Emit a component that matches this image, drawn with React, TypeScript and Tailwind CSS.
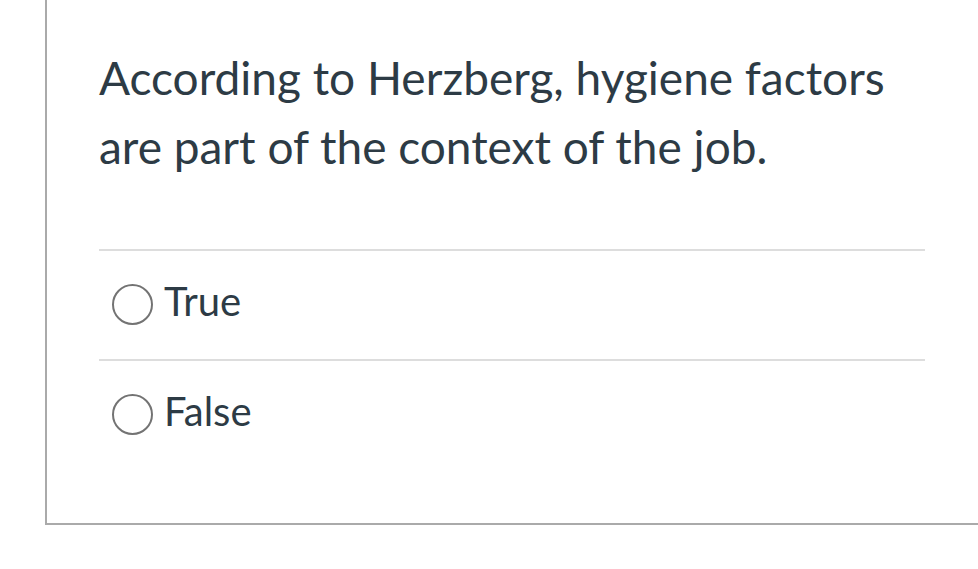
import React from "react";

const options = ["True", "False"];

export default function App() {
  return (
    <div className="w-[978px] h-[569px] bg-white overflow-hidden" style={{ fontFamily: "Lato, 'Noto Sans', sans-serif" }}>
      <div className="ml-[45px] h-[525px] border-l-2 border-b-2 border-[#aaaaaa] pl-[52px] pr-[53px] pt-[43px] text-[#2d3b45]">
        <p className="text-[46px] leading-[69px] pr-8">
          According to Herzberg, hygiene factors are part of the context of the job.
        </p>
        <div className="mt-[68px]">
          {options.map((opt) => (
            <div key={opt} className="border-t-2 border-[#dddddd] h-[110px] flex items-center pl-[13px] gap-[11px] pb-[2px]">
              <span className="w-[41px] h-[41px] rounded-full border-2 border-[#737373] shrink-0" />
              <span className="text-[40px] leading-none pb-[6px]">{opt}</span>
            </div>
          ))}
        </div>
      </div>
    </div>
  );
}
